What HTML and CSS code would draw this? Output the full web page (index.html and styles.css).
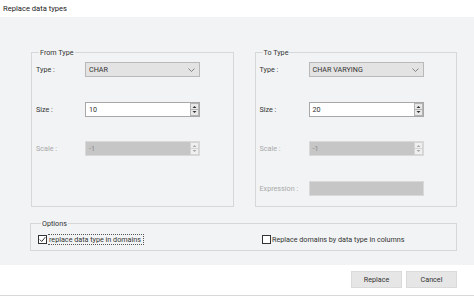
FILE: index.html
```html
<!DOCTYPE html>
<html lang="en">
<head>
    <meta charset="UTF-8">
    <meta name="viewport" content="width=device-width, initial-scale=1.0">
    <title>Replace data types</title>
    <link rel="stylesheet" href="styles.css">
</head>
<body>
    <div class="dialog">
        <div class="titlebar">Replace data types</div>

        <div class="content">
            <div class="types">
                <fieldset class="group">
                    <legend>From Type</legend>
                    <div class="fields">
                        <label>Type :</label>
                        <div class="combo">
                            <span>CHAR</span>
                            <svg class="chevron" width="7" height="4" viewBox="0 0 7 4"><path d="M0.5 0.5 L3.5 3.5 L6.5 0.5" fill="none" stroke="#6b6b6b" stroke-width="0.8"/></svg>
                        </div>

                        <label>Size :</label>
                        <div class="spin">
                            <span class="value">10</span>
                            <div class="spin-btns">
                                <svg width="9" height="13" viewBox="0 0 9 13"><rect x="0.5" y="0.5" width="8" height="12" fill="#e8e8e8" stroke="#b4b4b4"/><line x1="1" y1="6.5" x2="8" y2="6.5" stroke="#b4b4b4"/><path d="M2.5 5 L4.5 3 L6.5 5 Z" fill="#333"/><path d="M2.5 8 L4.5 10 L6.5 8 Z" fill="#333"/></svg>
                            </div>
                        </div>

                        <label class="disabled">Scale :</label>
                        <div class="spin off">
                            <span class="value">-1</span>
                            <div class="spin-btns">
                                <svg width="9" height="13" viewBox="0 0 9 13"><rect x="0.5" y="0.5" width="8" height="12" fill="#f0f0f0" stroke="#d4d4d4"/><line x1="1" y1="6.5" x2="8" y2="6.5" stroke="#d4d4d4"/><path d="M2.5 5 L4.5 3 L6.5 5 Z" fill="#a8a8a8"/><path d="M2.5 8 L4.5 10 L6.5 8 Z" fill="#a8a8a8"/></svg>
                            </div>
                        </div>
                    </div>
                </fieldset>

                <fieldset class="group">
                    <legend>To Type</legend>
                    <div class="fields">
                        <label>Type :</label>
                        <div class="combo">
                            <span>CHAR VARYING</span>
                            <svg class="chevron" width="7" height="4" viewBox="0 0 7 4"><path d="M0.5 0.5 L3.5 3.5 L6.5 0.5" fill="none" stroke="#6b6b6b" stroke-width="0.8"/></svg>
                        </div>

                        <label>Size :</label>
                        <div class="spin">
                            <span class="value">20</span>
                            <div class="spin-btns">
                                <svg width="9" height="13" viewBox="0 0 9 13"><rect x="0.5" y="0.5" width="8" height="12" fill="#e8e8e8" stroke="#b4b4b4"/><line x1="1" y1="6.5" x2="8" y2="6.5" stroke="#b4b4b4"/><path d="M2.5 5 L4.5 3 L6.5 5 Z" fill="#333"/><path d="M2.5 8 L4.5 10 L6.5 8 Z" fill="#333"/></svg>
                            </div>
                        </div>

                        <label class="disabled">Scale :</label>
                        <div class="spin off">
                            <span class="value">-1</span>
                            <div class="spin-btns">
                                <svg width="9" height="13" viewBox="0 0 9 13"><rect x="0.5" y="0.5" width="8" height="12" fill="#f0f0f0" stroke="#d4d4d4"/><line x1="1" y1="6.5" x2="8" y2="6.5" stroke="#d4d4d4"/><path d="M2.5 5 L4.5 3 L6.5 5 Z" fill="#a8a8a8"/><path d="M2.5 8 L4.5 10 L6.5 8 Z" fill="#a8a8a8"/></svg>
                            </div>
                        </div>

                        <label class="disabled">Expression :</label>
                        <div class="spin off"></div>
                    </div>
                </fieldset>
            </div>

            <fieldset class="options">
                <legend>Options</legend>
                <div class="check first">
                    <svg width="9" height="9" viewBox="0 0 9 9"><rect x="0.5" y="0.5" width="8" height="8" fill="#fff" stroke="#333"/><path d="M1.8 4.6 L3.7 6.5 L7.3 2.2" fill="none" stroke="#222" stroke-width="0.9"/></svg>
                    <span class="focus">replace data type in domains</span>
                </div>
                <div class="check">
                    <svg width="9" height="9" viewBox="0 0 9 9"><rect x="0.5" y="0.5" width="8" height="8" fill="#fff" stroke="#333"/></svg>
                    <span>Replace domains by data type in columns</span>
                </div>
            </fieldset>
        </div>

        <div class="footer">
            <button class="button">Replace</button>
            <button class="button">Cancel</button>
        </div>
    </div>
</body>
</html>
```

FILE: styles.css
```css
* {
    margin: 0;
    padding: 0;
    box-sizing: border-box;
}

body {
    background: #fff;
    font-family: Roboto, 'Noto Sans', sans-serif;
    font-size: 7.2px;
    color: #333;
    width: 474px;
    height: 299px;
    overflow: hidden;
}

.dialog {
    display: flex;
    flex-direction: column;
    height: 299px;
}

.titlebar {
    height: 17px;
    line-height: 17px;
    padding-left: 3px;
    background: #fff;
    color: #1a1a1a;
    font-size: 7.6px;
}

.content {
    height: 248px;
    background: #f2f3f5;
    padding: 30px 17px 0 30px;
}

.types {
    display: flex;
    gap: 21px;
    padding-left: 1px;
}

fieldset {
    border: 1px solid #d6d7d9;
    min-width: 0;
}

legend {
    padding: 0 1px;
    margin-left: 3px;
    line-height: 11px;
    color: #333;
}

.group {
    width: 203px;
    padding: 4px 0 10px 4px;
}

.fields {
    display: grid;
    grid-template-columns: 49px 115px;
    grid-auto-rows: 15px;
    row-gap: 24.5px;
    align-items: center;
}

.fields label {
    color: #333;
}

.fields label.disabled {
    color: #a8a8a8;
}

.combo {
    height: 15px;
    background: #e3e3e3;
    border: 1px solid #b9b9b9;
    display: flex;
    align-items: center;
    justify-content: space-between;
    padding: 0 4px 0 3px;
}

.spin {
    height: 15px;
    background: #fff;
    border: 1px solid #a8a8a8;
    display: flex;
    align-items: center;
    justify-content: space-between;
    padding-left: 3px;
}

.spin .spin-btns {
    display: flex;
    height: 13px;
}

.spin.off {
    background: #c6c6c6;
    border-color: #d9d9d9;
    color: #8d8d8d;
}

.spin.off .spin-btns {
    background: #f0f0f0;
}

.options {
    margin-top: 11px;
    height: 33px;
    padding: 1px 0 0 7px;
    display: flex;
    align-items: center;
}

.check {
    display: flex;
    align-items: center;
    gap: 1px;
    color: #333;
}

.check.first {
    width: 224px;
}

.check .focus {
    border: 1px dotted #555;
    border-left: none;
    padding: 0 2px 0 1px;
    line-height: 9px;
}

.footer {
    height: 31px;
    background: #fff;
    border-bottom: 1px solid #d9d9d9;
    display: flex;
    justify-content: flex-end;
    align-items: flex-start;
    gap: 4px;
    padding: 6px 17px 0 0;
}

.button {
    width: 51px;
    height: 17px;
    background: #e6e6e6;
    border: 1px solid #dadada;
    font-family: inherit;
    font-size: 7.2px;
    color: #333;
}
```
